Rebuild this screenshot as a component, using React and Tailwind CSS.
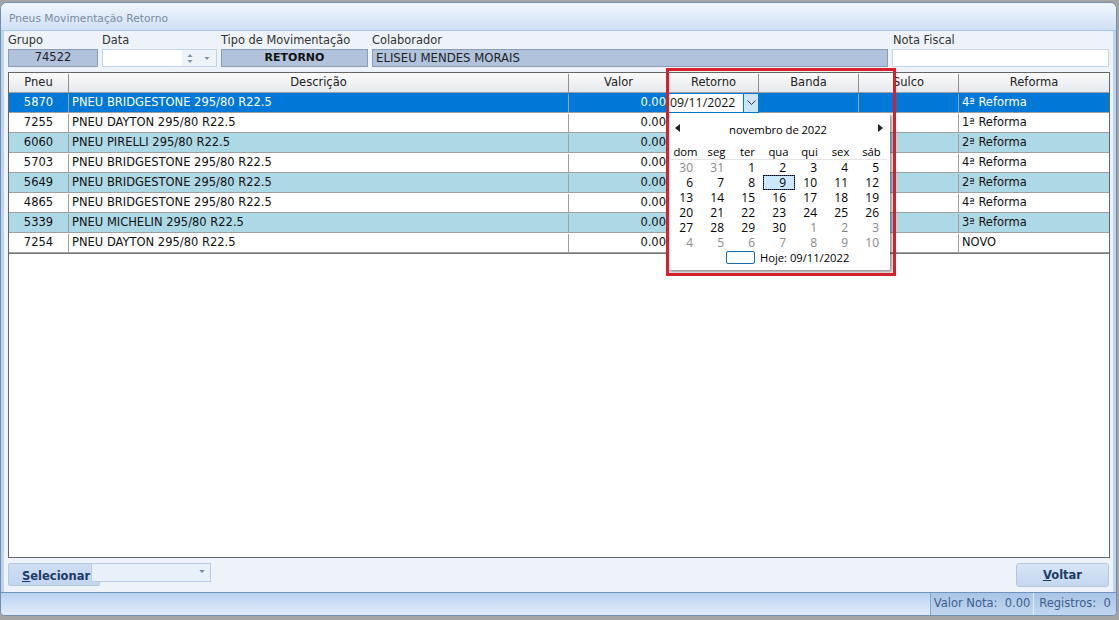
import React from "react";

const rows = [
  ["5870", "PNEU BRIDGESTONE 295/80 R22.5", "4ª Reforma"],
  ["7255", "PNEU DAYTON 295/80 R22.5", "1ª Reforma"],
  ["6060", "PNEU PIRELLI 295/80 R22.5", "2ª Reforma"],
  ["5703", "PNEU BRIDGESTONE 295/80 R22.5", "4ª Reforma"],
  ["5649", "PNEU BRIDGESTONE 295/80 R22.5", "2ª Reforma"],
  ["4865", "PNEU BRIDGESTONE 295/80 R22.5", "4ª Reforma"],
  ["5339", "PNEU MICHELIN 295/80 R22.5", "3ª Reforma"],
  ["7254", "PNEU DAYTON 295/80 R22.5", "NOVO"],
];

const cols = ["w-[60px]", "w-[500px]", "w-[100px]", "w-[90px]", "w-[100px]", "w-[100px]", "w-[150px]"];

const heads = [
  ["Pneu", "w-[60px]"],
  ["Descrição", "w-[500px]"],
  ["Valor", "w-[100px]"],
  ["Retorno", "w-[90px]"],
  ["Banda", "w-[100px]"],
  ["Sulco", "w-[100px]"],
  ["Reforma", "w-[150px]"],
];

const weeks = [
  [[30, 1], [31, 1], [1], [2], [3], [4], [5]],
  [[6], [7], [8], [9, 0, 1], [10], [11], [12]],
  [[13], [14], [15], [16], [17], [18], [19]],
  [[20], [21], [22], [23], [24], [25], [26]],
  [[27], [28], [29], [30], [1, 1], [2, 1], [3, 1]],
  [[4, 1], [5, 1], [6, 1], [7, 1], [8, 1], [9, 1], [10, 1]],
];

function Label({ className, children }) {
  return <div className={`text-[11.4px] leading-[14px] text-[#333] ${className}`}>{children}</div>;
}

function Row({ r, i }) {
  const sel = i === 0;
  const bg = sel ? "bg-[#0078d7] text-white" : i % 2 === 0 ? "bg-[#add8e6] text-[#111]" : "bg-white text-[#111]";
  const cell = "h-full border-r border-[#a0a0a0] flex items-center overflow-hidden";
  return (
    <div className={`flex h-5 border-b border-[#a0a0a0] pt-px ${bg}`}>
      <div className={`${cell} ${cols[0]} justify-center`}>{r[0]}</div>
      <div className={`${cell} ${cols[1]} pl-[3px]`}>{r[1]}</div>
      <div className={`${cell} ${cols[2]} justify-end pr-[2px]`}>0.00</div>
      <div className={`${cell} ${cols[3]}`} />
      <div className={`${cell} ${cols[4]}`} />
      <div className={`${cell} ${cols[5]}`} />
      <div className={`h-full flex items-center ${cols[6]} pl-[3px]`}>{r[2]}</div>
    </div>
  );
}

function Calendar() {
  return (
    <div className="absolute left-[667px] top-[113px] w-[223px] h-[157px] bg-white shadow-[2px_2px_3px_rgba(0,0,0,0.45)] text-[12px] text-black font-['Open_Sans','Noto_Sans',sans-serif] z-10">
      <div className="flex items-start justify-between h-[30px] pl-2 pr-[7px] pt-[11px]">
        <svg width="5" height="8" viewBox="0 0 5 8"><path d="M5 0 L0 4 L5 8 Z" fill="#222" /></svg>
        <span className="text-[11.3px] leading-[15px] -mt-[2px] -ml-[2px] tracking-[-0.1px]">novembro de 2022</span>
        <svg width="5" height="8" viewBox="0 0 5 8"><path d="M0 0 L5 4 L0 8 Z" fill="#222" /></svg>
      </div>
      <div className="ml-[3px] mr-[4px] grid grid-cols-7 w-[217px] h-[17px] border-b border-[#e4e4e4] items-center text-center text-[11.3px] leading-[15px]">
        {["dom", "seg", "ter", "qua", "qui", "sex", "sáb"].map((d) => (
          <div key={d}>{d}</div>
        ))}
      </div>
      <div className="mx-[4px] grid grid-cols-7 w-[217px] text-right text-[12px]">
        {weeks.flat().map(([n, muted, sel], i) => (
          <div
            key={i}
            className={`h-[15px] ${muted ? "text-[#8a8a8a]" : ""} ${
              sel
                ? "leading-[13px] pr-[8px] bg-[#cce8ff] border border-[#1a5a9a] outline outline-1 outline-dotted outline-black -outline-offset-1 -ml-px"
                : "leading-[15px] pr-[9px]"
            }`}
          >
            {n}
          </div>
        ))}
      </div>
      <div className="flex items-center h-[15px] pl-[59px]">
        <div className="w-[29px] h-[13px] border border-[#1a6cb0] rounded-[2px] mr-[5px]" />
        <span className="text-[11.2px] leading-[15px]">Hoje: 09/11/2022</span>
      </div>
    </div>
  );
}

export default function App() {
  return (
    <div className="relative w-[1119px] h-[620px] overflow-hidden bg-[#a4a4a4] font-['DejaVu_Sans',sans-serif] text-[11.5px]">
      <div className="mt-[2px] w-[1117px] h-[614px] flex flex-col rounded-t-[7px] rounded-b-[5px] border border-[#6f8dad] overflow-hidden bg-[#eaf1f9]">
        <div className="h-[28px] shrink-0 flex items-center pl-[8px] pt-[5px] text-[10.7px] text-[#7b8ba1] bg-gradient-to-b from-[#f1f6fd] to-[#cfe0f5] border-b border-[#a9c6ea]">
          Pneus Movimentação Retorno
        </div>

        <div className="flex-1 min-h-0 flex flex-col border-x-[3px] border-[#bfd5ef] pl-[4px] pr-[3px] bg-[#eef3f9]">
          <div className="h-[12px] mt-[2px] flex items-start">
            <Label className="w-[94px]">Grupo</Label>
            <Label className="w-[119px]">Data</Label>
            <Label className="w-[151px]">Tipo de Movimentação</Label>
            <Label className="w-[521px]">Colaborador</Label>
            <Label>Nota Fiscal</Label>
          </div>
          <div className="flex h-[18px] mt-[4px]">
            <div className="w-[90px] flex items-center justify-center bg-[#b0c2dc] border border-[#8b9cb2] text-[#222]">74522</div>
            <div className="ml-[4px] w-[115px] flex items-center bg-white border border-[#c3d4e8]">
              <div className="flex-1" />
              <div className="w-[15px] h-full bg-[#eef3f9] flex flex-col items-center justify-center gap-[3px]">
                <svg width="6" height="3" viewBox="0 0 7 4"><path d="M3.5 0 L7 4 H0 Z" fill="#7d94ad" /></svg>
                <svg width="6" height="3" viewBox="0 0 7 4"><path d="M0 0 H7 L3.5 4 Z" fill="#7d94ad" /></svg>
              </div>
              <div className="w-[19px] h-full bg-[#eef3f9] flex items-center justify-center">
                <svg width="6" height="3" viewBox="0 0 7 4"><path d="M0 0 H7 L3.5 4 Z" fill="#7d94ad" /></svg>
              </div>
            </div>
            <div className="ml-[4px] w-[147px] flex items-center justify-center bg-[#b0c2dc] border border-[#8b9cb2] font-bold text-[11px] text-[#111]">RETORNO</div>
            <div className="ml-[4px] w-[516px] flex items-center bg-[#b0c2dc] border border-[#8b9cb2] pl-[3px] pt-px text-[11.7px] text-[#222]">ELISEU MENDES MORAIS</div>
            <div className="ml-[4px] w-[217px] bg-white border border-[#c3d4e8]" />
          </div>

          <div className="mt-[5px] w-[1102px] h-[486px] border border-[#666] bg-white overflow-hidden">
            <div className="flex h-[20px] border-b border-[#a0a0a0] pt-px bg-gradient-to-b from-[#fbfbfb] to-[#e6e8ec] text-[#222]">
              {heads.map(([h, w], i) => (
                <div key={h} className={`${w} flex items-center justify-center h-full ${i < 6 ? "border-r border-[#8f8f8f]" : ""}`}>{h}</div>
              ))}
            </div>
            {rows.map((r, i) => (
              <Row key={r[0]} r={r} i={i} />
            ))}
            <div className="h-px bg-[#777]" />
          </div>

          <div className="flex-1 flex justify-between items-start pt-[5px]">
            <div className="flex items-start">
              <div className="w-[92px] h-[23px] -mr-[9px] rounded-[2px] border border-[#b3c7df] bg-gradient-to-b from-[#cfdff3] to-[#c2d5ee] flex pl-[13px] pt-[4px] font-bold text-[#1c3a66]">
                <span><span className="underline">S</span>elecionar</span>
              </div>
              <div className="relative w-[120px] h-[19px] bg-[#e8f0fa] border border-[#b9cbe2] flex justify-end pr-[5px] pt-[6px]">
                <svg width="6" height="3" viewBox="0 0 7 4"><path d="M0 0 H7 L3.5 4 Z" fill="#6b86a6" /></svg>
              </div>
            </div>
            <div className="w-[93px] h-[24px] mr-[1px] pt-px rounded-[3px] border border-[#b3c7df] bg-gradient-to-b from-[#d7e5f6] to-[#c4d7ef] flex items-center justify-center font-bold text-[#1c3a66]">
              <span><span className="underline">V</span>oltar</span>
            </div>
          </div>
        </div>

        <div className="h-[23px] shrink-0 flex justify-end border-t border-[#6f93bd] bg-gradient-to-b from-[#b9d2f0] via-[#cfe0f6] to-[#e0ebf9]">
          <div className="w-[104px] h-full flex items-center justify-center text-[#3c5f8d] bg-gradient-to-b from-[#a9c4e6] to-[#c2d7f0] border-l border-[#8aa7cb] border-r border-r-[#e6eef8]">Valor Nota:&nbsp; 0.00</div>
          <div className="w-[82px] h-full flex items-center justify-center text-[#3c5f8d] bg-gradient-to-b from-[#a9c4e6] to-[#c2d7f0]">Registros:&nbsp; 0</div>
        </div>
      </div>

      <div className="absolute left-[667px] top-[93px] w-[92px] h-[20px] flex bg-white border border-[#0078d7] z-10 text-[12.3px] text-[#111] font-['Open_Sans','Noto_Sans',sans-serif]">
        <div className="flex-1 pl-[2px] leading-[18px]">09/11/2022</div>
        <div className="w-[15px] bg-[#cce4f7] border-l border-[#0078d7] flex items-center justify-center">
          <svg width="9" height="6" viewBox="0 0 9 6"><path d="M0.5 0.5 L4.5 4.5 L8.5 0.5" fill="none" stroke="#333" /></svg>
        </div>
      </div>

      <Calendar />

      <div className="absolute left-[666px] top-[68px] w-[230px] h-[208px] border-[3px] border-[#d8202c] z-20" />
    </div>
  );
}
